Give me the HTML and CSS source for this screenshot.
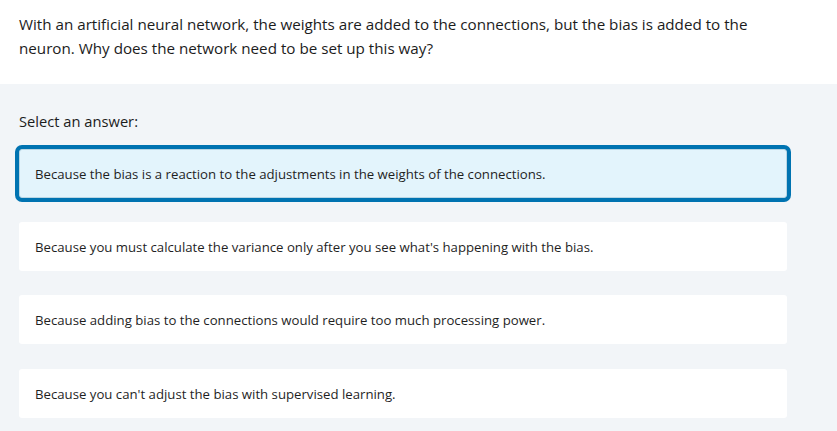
FILE: index.html
```html
<!DOCTYPE html>
<html lang="en">
<head>
<meta charset="utf-8">
<link rel="stylesheet" href="styles.css">
</head>
<body>
<div class="page">
  <header class="question">
    <p>With an artificial neural network, the weights are added to the connections, but the bias is added to the neuron. Why does the network need to be set up this way?</p>
  </header>
  <section class="answers">
    <div class="prompt">Select an answer:</div>
    <div class="options">
      <div class="option selected">Because the bias is a reaction to the adjustments in the weights of the connections.</div>
      <div class="option">Because you must calculate the variance only after you see what's happening with the bias.</div>
      <div class="option">Because adding bias to the connections would require too much processing power.</div>
      <div class="option">Because you can't adjust the bias with supervised learning.</div>
    </div>
  </section>
</div>
</body>
</html>
```
FILE: styles.css
```css
* { box-sizing: border-box; }
html, body { margin: 0; padding: 0; }
body {
  font-family: "Open Sans", "Noto Sans", sans-serif;
  color: #1c1c1c;
  background: #f2f5f8;
  width: 837px;
  height: 431px;
  overflow: hidden;
}
.page { display: flex; flex-direction: column; }
.question {
  background: #ffffff;
  height: 84px;
  padding: 12px 50px 0 19px;
}
.question p {
  margin: 0;
  font-size: 15.2px;
  line-height: 24px;
}
.answers {
  padding: 25px 50px 0 19px;
}
.prompt {
  font-size: 14.7px;
  line-height: 24px;
  margin-bottom: 16px;
}
.options {
  display: flex;
  flex-direction: column;
  gap: 24px;
  width: 768px;
}
.option {
  height: 49px;
  display: flex;
  align-items: center;
  padding: 0 16px;
  background: #ffffff;
  border-radius: 3px;
  font-size: 13.2px;
  color: #1f1f1f;
}
.option.selected {
  background: #e3f4fc;
  border: 1px solid #b9d6e4;
  padding: 0 15px;
  box-shadow: 0 0 0 4px #0073b1;
}
.option:last-child { margin-top: 1px; }
```
